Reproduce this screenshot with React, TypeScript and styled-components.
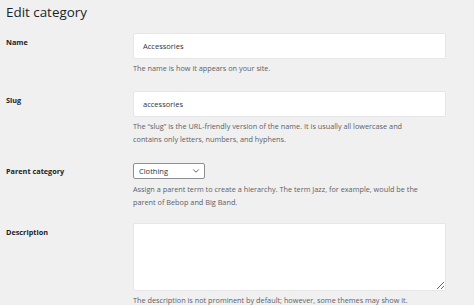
import React from 'react';
import styled, { createGlobalStyle } from 'styled-components';
import { ChevronDown } from 'lucide-react';

const GlobalStyle = createGlobalStyle`
  html, body {
    margin: 0;
    padding: 0;
    background: #f0f0f1;
  }
  body {
    font-family: "Open Sans", "Noto Sans", "Liberation Sans", sans-serif;
    color: #1d2327;
  }
`;

const Page = styled.div`
  width: 474px;
  height: 305px;
  overflow: hidden;
  padding: 0 6px;
  box-sizing: border-box;
`;

const Title = styled.h1`
  margin: 0;
  font-size: 13.4px;
  line-height: 24px;
  font-weight: 400;
  color: #1d2327;
`;

const Form = styled.div`
  display: flex;
  flex-direction: column;
  margin-top: 9px;
`;

const Row = styled.div<{ $space?: number }>`
  display: grid;
  grid-template-columns: 127px 313px;
  align-items: start;
  margin-bottom: ${(p) => p.$space ?? 16}px;
`;

const Label = styled.label`
  padding-top: 3px;
  font-size: 7.3px;
  line-height: 12px;
  font-weight: 700;
  color: #1d2327;
`;

const Field = styled.div`
  display: flex;
  flex-direction: column;
  align-items: flex-start;
`;

const TextInput = styled.input`
  display: block;
  width: 100%;
  height: 26px;
  margin: 0;
  box-sizing: border-box;
  border: 1px solid #e6e6e8;
  border-radius: 2px;
  background: #fff;
  padding: 0 9px;
  font-family: inherit;
  font-size: 7.5px;
  color: #2c3338;
  outline: none;
`;

const Hint = styled.p<{ $top?: number }>`
  margin: ${(p) => p.$top ?? 3}px 0 0;
  font-size: 7.3px;
  line-height: 13px;
  color: #5c6167;
  white-space: nowrap;
`;

const SelectWrap = styled.div`
  position: relative;
  width: 72px;
  height: 16px;
  margin-top: 1px;
`;

const Select = styled.select`
  display: block;
  appearance: none;
  width: 100%;
  height: 100%;
  margin: 0;
  box-sizing: border-box;
  border: 1px solid #8c8f94;
  border-radius: 2px;
  background: #fff;
  padding: 0 0 0 5px;
  font-family: inherit;
  font-size: 7.5px;
  line-height: 14px;
  color: #2c3338;
  outline: none;
`;

const Chevron = styled(ChevronDown)`
  position: absolute;
  right: 4px;
  top: 3px;
  pointer-events: none;
  color: #50575e;
`;

const TextArea = styled.textarea`
  display: block;
  width: 100%;
  height: 68px;
  margin: 0;
  box-sizing: border-box;
  border: 1px solid #e6e6e8;
  border-radius: 2px;
  background: #fff;
  font-family: inherit;
  font-size: 7.5px;
  outline: none;
  resize: vertical;
`;

export default function App() {
  return (
    <Page>
      <GlobalStyle />
      <Title>Edit category</Title>
      <Form>
        <Row>
          <Label>Name</Label>
          <Field>
            <TextInput defaultValue="Accessories" />
            <Hint>The name is how it appears on your site.</Hint>
          </Field>
        </Row>
        <Row>
          <Label>Slug</Label>
          <Field>
            <TextInput defaultValue="accessories" />
            <Hint>
              The “slug” is the URL-friendly version of the name. It is usually all lowercase and
              <br />
              contains only letters, numbers, and hyphens.
            </Hint>
          </Field>
        </Row>
        <Row $space={14}>
          <Label>Parent category</Label>
          <Field>
            <SelectWrap>
              <Select defaultValue="clothing">
                <option value="clothing">Clothing</option>
              </Select>
              <Chevron size={10} strokeWidth={2.2} />
            </SelectWrap>
            <Hint $top={4}>
              Assign a parent term to create a hierarchy. The term Jazz, for example, would be the
              <br />
              parent of Bebop and Big Band.
            </Hint>
          </Field>
        </Row>
        <Row $space={0}>
          <Label>Description</Label>
          <Field>
            <TextArea />
            <Hint>The description is not prominent by default; however, some themes may show it.</Hint>
          </Field>
        </Row>
      </Form>
    </Page>
  );
}
